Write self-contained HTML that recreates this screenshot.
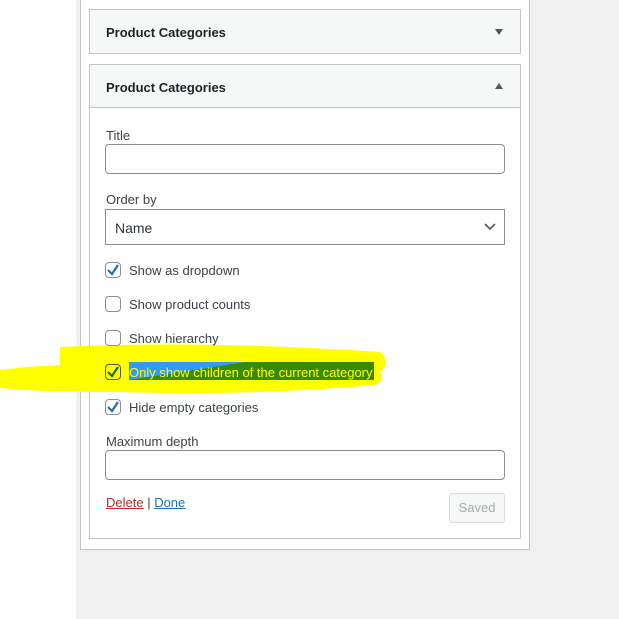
<!DOCTYPE html>
<html><head><style>
body{margin:0;width:619px;height:619px;position:relative;overflow:hidden;background:#fff;font-family:"Liberation Sans",sans-serif;font-size:13px;color:#3c434a}
.gray{position:absolute;left:76px;top:0;width:543px;height:619px;background:#f0f0f1}
.outer{position:absolute;left:80px;top:-2px;width:448px;height:550px;background:#fff;border:1px solid #c3c4c7}
.panel{position:absolute;left:89px;width:430px;border:1px solid #c3c4c7;background:#fff}
.hd{height:42px;background:#f6f7f7;position:relative}
.hd span{position:absolute;left:16px;top:15px;font-weight:bold;font-size:13px;color:#1d2327}
.tri{position:absolute;right:17px;top:19px;width:0;height:0;border-left:4px solid transparent;border-right:4px solid transparent}
.lbl{position:absolute;left:106px;font-size:13px}
.inp{position:absolute;left:105px;width:398px;border:1px solid #8c8f94;border-radius:4px;background:#fff}
.cb{position:absolute;left:105px;width:14px;height:14px;border:1px solid #8c8f94;border-radius:4px;background:#fff}
.cl{position:absolute;left:129px;font-size:13px}
</style></head><body>
<div class="gray"></div>
<div class="outer"></div>
<div class="panel" style="top:9px;height:43px"><div class="hd" style="height:43px"><span>Product Categories</span><div class="tri" style="border-top:6px solid #50575e;top:19px"></div></div></div>
<div class="panel" style="top:64px;height:473px"><div class="hd" style="border-bottom:1px solid #c3c4c7"><span>Product Categories</span><div class="tri" style="border-bottom:6px solid #50575e;top:18px"></div></div></div>
<div class="lbl" style="top:128px">Title</div>
<div class="inp" style="top:144px;height:28px"></div>
<div class="lbl" style="top:192px">Order by</div>
<div class="inp" style="top:209px;height:34px;border-radius:0"><span style="position:absolute;left:9px;top:10px;font-size:14px;color:#2c3338">Name</span>
<svg style="position:absolute;right:8px;top:13px" width="12" height="8"><path d="M1 1 L6 6 L11 1" stroke="#50575e" stroke-width="1.6" fill="none"/></svg></div>
<svg style="position:absolute;left:0;top:0" width="619" height="619">
<path d="M60 347 Q200 340 380 352 Q392 362 380 372 Q385 380 375 385 Q250 396 120 392 Q40 392 0 388 L0 370 Q30 366 60 365 Z" fill="#ffff00"/>
<rect x="129" y="362" width="245" height="18" fill="#3a8a00"/>
<path d="M129 362 L245 362 L195 370 L129 380 Z" fill="#3399ff"/>
</svg>
<div class="cb" style="top:262px"></div><div class="cl" style="top:263px">Show as dropdown</div>
<div class="cb" style="top:296px"></div><div class="cl" style="top:297px">Show product counts</div>
<div class="cb" style="top:330px"></div><div class="cl" style="top:331px">Show hierarchy</div>
<div class="cb" style="top:364px;background:transparent;border-color:#555"></div><div class="cl" style="top:365px;color:#ffff00">Only show children of the current category</div>
<div class="cb" style="top:399px"></div><div class="cl" style="top:400px">Hide empty categories</div>
<svg style="position:absolute;left:0;top:0" width="619" height="619">
<path d="M108 270 L112 274 L118 265" stroke="#2271b1" stroke-width="2.2" fill="none"/>
<path d="M108 372 L112 376 L118 367" stroke="#1a6a00" stroke-width="2.2" fill="none"/>
<path d="M108 407 L112 411 L118 402" stroke="#2271b1" stroke-width="2.2" fill="none"/>
</svg>
<div class="lbl" style="top:434px">Maximum depth</div>
<div class="inp" style="top:450px;height:28px"></div>
<div style="position:absolute;left:106px;top:495px"><span style="color:#b32d2e;text-decoration:underline">Delete</span> | <span style="color:#2271b1;text-decoration:underline">Done</span></div>
<div style="position:absolute;left:449px;top:493px;width:54px;height:28px;border:1px solid #dcdcde;border-radius:3px;background:#f6f7f7;color:#a7aaad;text-align:center;line-height:28px">Saved</div>
</body></html>
